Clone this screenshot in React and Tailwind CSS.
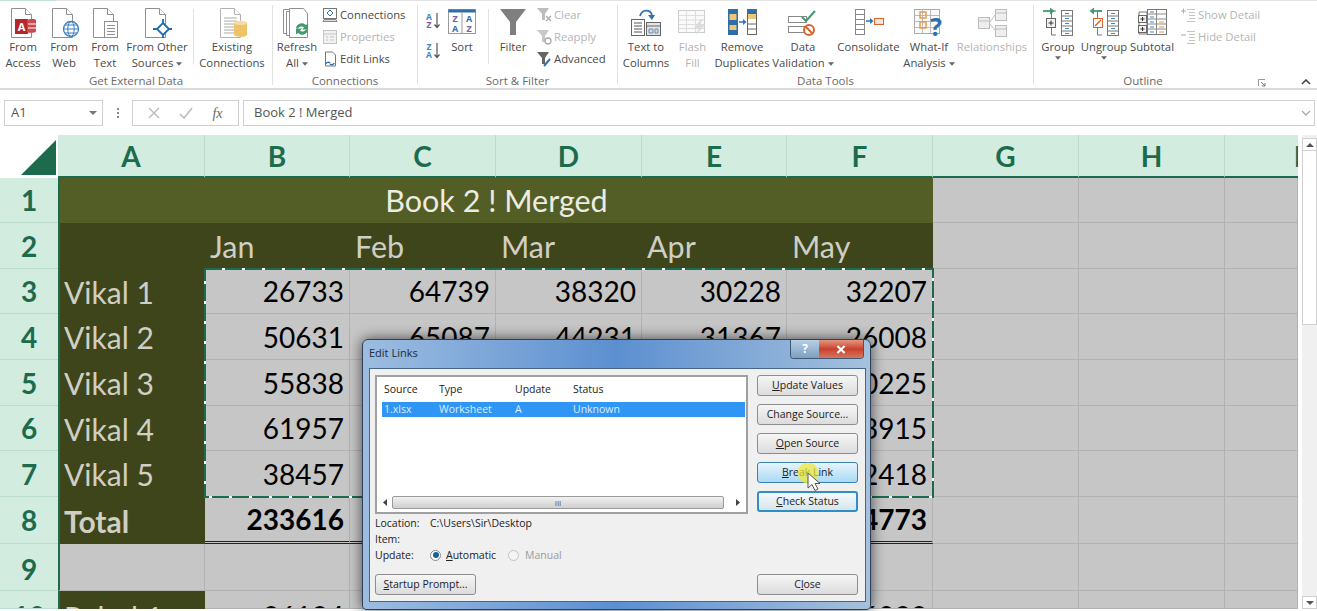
import React from "react";

const G = "#8f8f8f";

function Doc({ s = G }) {
    return (
        <>
            <path d="M4.5 1.500h14l6 6v23h-20z" fill="#fff" stroke={s} />
            <path d="M18.500 1.500v6h6" fill="#fff" stroke={s} />
        </>
    );
}

const Ico = ({ children, className = "w-[32px] h-[32px]", vb = "0 0 32 32" }) => (
    <svg viewBox={vb} className={className}>{children}</svg>
);

const FromAccess = () => (
    <Ico>
        <Doc />
        <rect x="8" y="12" width="13" height="15" fill="#b3272d" />
        <text x="14.500" y="24" fontSize="11" fontWeight="700" fill="#fff" textAnchor="middle" fontFamily="Open Sans">A</text>
        <path d="M20 13c2-1.500 9-1.500 9 0v11c0 2-7 2.500-9 1z" fill="#c9494c" />
        <path d="M21 17h8M21 21h8" stroke="#fff" />
    </Ico>
);
const FromWeb = () => (
    <Ico>
        <Doc />
        <circle cx="23" cy="22" r="7.500" fill="#fff" stroke="#3f7fc1" strokeWidth="1.300" />
        <ellipse cx="23" cy="22" rx="3.200" ry="7.500" fill="none" stroke="#3f7fc1" />
        <path d="M15.500 22h15M17 18h12M17 26h12" stroke="#3f7fc1" />
    </Ico>
);
const FromText = () => (
    <Ico>
        <Doc />
        <rect x="15.500" y="14.500" width="13" height="16" fill="#fff" stroke={G} />
        <path d="M18 18.500h8M18 21.500h8M18 24.500h8M18 27.500h8" stroke={G} />
    </Ico>
);
const FromOther = () => (
    <Ico>
        <Doc />
        <path d="M22 16l6 6-6 6-6-6z" fill="#fff" stroke="#1f6cb0" strokeWidth="1.800" />
        <path d="M22 12v5M22 27v4M12 22h5M27 22h4" stroke="#1f6cb0" strokeWidth="1.800" />
    </Ico>
);
const Existing = () => (
    <Ico>
        <Doc s="#b3b3b3" />
        <path d="M8 11h13M8 14h13M8 17h10M8 20h10M8 23h10M8 26h10" stroke="#aaa" />
        <path d="M18 16c2-2 12-2 13 0v12c-1 2.500-11 2.500-13 0z" fill="#eec36a" />
        <ellipse cx="24.500" cy="16" rx="6.500" ry="2" fill="#f6dca0" />
    </Ico>
);
const Refresh = () => (
    <Ico>
        <path d="M2.500 2.500h13v24h-13z" fill="#fff" stroke={G} />
        <path d="M5.500 4.500h13v24h-13z" fill="#fff" stroke={G} />
        <path d="M8.500 1.500h14l4 5v24h-18z" fill="#fff" stroke={G} />
        <path d="M15 21a6 6 0 0 1 10-3l2-1.500v6h-6l2-2a4 4 0 0 0-6 1z" fill="#3f9b6e" />
        <path d="M27 23a6 6 0 0 1-10 3l-2 1.500v-6h6l-2 2a4 4 0 0 0 6-1z" fill="#3f9b6e" />
    </Ico>
);
const Small = ({ children }) => <svg viewBox="0 0 16 16" className="w-[16px] h-[16px] shrink-0">{children}</svg>;
const ConnIco = () => (
    <Small>
        <rect x="1.500" y="1.500" width="13" height="10" fill="#fff" stroke="#777" />
        <path d="M8 3l3 3-3 3-3-3z" fill="#fff" stroke="#2d72b8" />
        <path d="M2 12.500l-1 2h14l-1-2z" fill="#ddd" stroke="#888" />
    </Small>
);
const PropIco = () => (
    <Small>
        <rect x="1.500" y="1.500" width="13" height="13" fill="#f2f2f2" stroke="#c4c4c4" />
        <path d="M2 5h12M4 8h2M8 8h4M4 11h2M8 11h4" stroke="#c4c4c4" />
    </Small>
);
const LinksIco = () => (
    <Small>
        <path d="M3.500 1h7l3 3v11h-10z" fill="#fff" stroke="#777" />
        <path d="M4 13c0-2 3-2 4-1M12 12c0 2-3 2-4 1" fill="none" stroke="#2d72b8" strokeWidth="1.500" />
    </Small>
);
const SortSmall = ({ up }) => (
    <svg viewBox="0 0 16 18" className="w-[16px] h-[18px]">
        <text x="4" y="8" fontSize="8.500" fontWeight="700" fill="#3f86c8" textAnchor="middle" fontFamily="Open Sans">{up ? "A" : "Z"}</text>
        <text x="4" y="16" fontSize="8.500" fontWeight="700" fill={up ? "#7d5aa6" : "#3f86c8"} textAnchor="middle" fontFamily="Open Sans">{up ? "Z" : "A"}</text>
        <path d="M12 1v14M9.500 12.500l2.500 3 2.500-3" fill="none" stroke="#555" strokeWidth="1.200" />
    </svg>
);
const SortBig = () => (
    <svg viewBox="0 0 28 25" className="w-[28px] h-[25px]">
        <rect x=".5" y=".5" width="27" height="24" fill="#fff" stroke="#999" />
        <rect x=".5" y=".5" width="27" height="3" fill="#2f6fa8" />
        <path d="M14 3v21" stroke="#999" />
        <text x="7" y="13" fontSize="9" fontWeight="700" fill="#7d5aa6" textAnchor="middle" fontFamily="Open Sans">Z</text>
        <text x="7" y="23" fontSize="9" fontWeight="700" fill="#2f6fa8" textAnchor="middle" fontFamily="Open Sans">A</text>
        <text x="21" y="13" fontSize="9" fontWeight="700" fill="#2f6fa8" textAnchor="middle" fontFamily="Open Sans">A</text>
        <text x="21" y="23" fontSize="9" fontWeight="700" fill="#7d5aa6" textAnchor="middle" fontFamily="Open Sans">Z</text>
    </svg>
);
const Funnel = () => (
    <svg viewBox="0 0 28 28" className="w-[28px] h-[28px]">
        <path d="M1 1h26l-10 13v13h-6V14z" fill="#7f7f7f" />
    </svg>
);
const SmallFunnel = ({ c, children }) => (
    <Small>
        <path d="M1 1h12l-4 6v6H6V7z" fill={c} />
        {children}
    </Small>
);
const TextCols = () => (
    <Ico>
        <rect x="1.500" y="12.500" width="13" height="16" fill="#fff" stroke="#666" />
        <path d="M4 16h8M4 19h8M4 22h8M4 25h8" stroke="#555" />
        <rect x="16.500" y="15.500" width="14" height="13" fill="#e4e4e4" stroke="#666" />
        <path d="M16.500 19h14" stroke="#666" />
        <path d="M19 22h4v4h-4zM25 22h3v4h-3z" fill="#cfdbe8" stroke="#6b8fb3" />
        <path d="M10 9c2-7 10-7 12-1" fill="none" stroke="#2d72b8" strokeWidth="1.800" />
        <path d="M18 8h7l-3 5z" fill="#2d72b8" />
    </Ico>
);
const Flash = () => (
    <Ico>
        <rect x="1.500" y="3.500" width="26" height="22" fill="#fafafa" stroke="#ccc" />
        <path d="M1.500 8.500h26M1.500 13h26M1.500 17.500h26M1.500 21.500h26M9.500 3.500v22M18.500 3.500v22" stroke="#ddd" />
        <path d="M24 12l-7 9h5l-3 7 9-10h-5l3-6z" fill="#ddd" />
    </Ico>
);
const Remove = () => (
    <Ico>
        <rect x="2" y="2" width="10" height="26" fill="#2f6fa8" />
        <rect x="3.500" y="7" width="7" height="6" fill="#f0c674" />
        <rect x="3.500" y="18" width="7" height="5" fill="#f0c674" />
        <rect x="21.500" y="2.500" width="9" height="25" fill="#fff" stroke="#666" />
        <rect x="22" y="3" width="8" height="4" fill="#2f6fa8" />
        <rect x="22" y="7" width="8" height="5" fill="#f0c674" />
        <path d="M22 17h8M22 22h8" stroke="#666" />
        <path d="M13 15h5" stroke="#2d72b8" strokeWidth="1.500" />
        <path d="M17 12l3.500 3-3.500 3z" fill="#2d72b8" />
    </Ico>
);
const Validation = () => (
    <Ico>
        <rect x="1.500" y="9.500" width="18" height="6" fill="#fff" stroke="#888" />
        <rect x="1.500" y="19.500" width="18" height="6" fill="#fff" stroke="#888" />
        <path d="M15 10l4 4 9-10" fill="none" stroke="#3f9b6e" strokeWidth="2" />
        <circle cx="22" cy="23" r="5" fill="#fff" stroke="#d9642f" strokeWidth="2" />
        <path d="M18.500 19.500l7 7" stroke="#d9642f" strokeWidth="2" />
    </Ico>
);
const Consolidate = () => (
    <Ico>
        <rect x="2.500" y="2.500" width="9" height="25" fill="#fff" stroke="#888" />
        <path d="M3 7.500h8M3 12.500h8M3 17.500h8M3 22.500h8" stroke="#888" />
        <path d="M13 14h5" stroke="#2d72b8" strokeWidth="1.500" />
        <path d="M17 11l3.500 3-3.500 3z" fill="#2d72b8" />
        <rect x="21.500" y="11.500" width="9" height="6" fill="#fbe3d6" stroke="#d9642f" />
    </Ico>
);
const WhatIf = () => (
    <Ico>
        <rect x="1.500" y="2.500" width="25" height="24" fill="#fafafa" stroke="#aaa" />
        <path d="M1.500 8.500h25M1.500 14.500h25M1.500 20.500h25M9.500 2.500v24M17.500 2.500v24" stroke="#bbb" />
        <rect x="7" y="5" width="6" height="6" fill="none" stroke="#e3964a" strokeWidth="1.400" />
        <rect x="7" y="15" width="6" height="6" fill="none" stroke="#e3964a" strokeWidth="1.400" />
        <text x="23" y="29" fontSize="25" fontWeight="700" fill="#2f6fa8" textAnchor="middle" fontFamily="Open Sans">?</text>
    </Ico>
);
const Relations = () => (
    <Ico>
        <g fill="#eee" stroke="#bdbdbd">
            <rect x="2.500" y="10.500" width="11" height="11" />
            <rect x="19.500" y="2.500" width="11" height="11" />
            <rect x="19.500" y="18.500" width="11" height="11" />
        </g>
        <path d="M2.500 14h11M19.500 6h11M19.500 22h11M14 15l5-7M14 17l5 6" stroke="#bdbdbd" fill="none" />
    </Ico>
);
const OutlineBox = ({ plus, red }) => (
    <>
        <path d="M14 4H9.500v24H14" fill="none" stroke="#777" />
        <rect x="19.500" y="3.500" width="11" height="25" fill="#fff" stroke="#777" />
        <path d="M20 9h10M20 14h10M20 19h10M20 24h10" stroke="#777" />
        <path d="M23 6.500h4M23 11.500h4M23 16.500h4M23 21.500h4M23 26.500h4" stroke="#3f86c8" />
        <rect x={red ? "5.500" : "4.500"} y="11.500" width="9" height="9" fill={red ? "#fff" : "#f2f2f2"} stroke={red ? "#d9642f" : "#666"} />
        {plus ? <path d="M6.500 16h5M9 13.500v5" stroke="#333" /> : <path d="M7 19l6-6" stroke="#d9642f" strokeWidth="1.500" />}
    </>
);
const GroupIco = () => (
    <Ico>
        <OutlineBox plus />
        <path d="M1 4h10" stroke="#3f9b6e" strokeWidth="1.800" />
        <path d="M8 .5l4.500 3.500L8 7.500z" fill="#3f9b6e" />
    </Ico>
);
const UngroupIco = () => (
    <Ico>
        <OutlineBox red />
        <path d="M4 4h10" stroke="#3f9b6e" strokeWidth="1.800" />
        <path d="M6 .5L1.500 4 6 7.500z" fill="#3f9b6e" />
    </Ico>
);
const Subtotal = () => (
    <Ico>
        <rect x="11.500" y="2.500" width="19" height="25" fill="#fff" stroke="#777" />
        <path d="M12 7h18M12 12h18M12 17h18M12 22h18M20.500 3v24" stroke="#888" />
        <path d="M14 5h4M14 10h4M14 15h4M14 20h4M14 25h4" stroke="#3f86c8" />
        <path d="M23 15h5M23 20h5M23 25h5" stroke="#e3964a" />
        <path d="M3 5h8v22H3z" fill="none" stroke="#777" />
        <rect x="2.500" y="8.500" width="8" height="7" fill="#f2f2f2" stroke="#666" />
        <rect x="2.500" y="18.500" width="8" height="7" fill="#f2f2f2" stroke="#666" />
        <path d="M4.500 12h4M6.500 10v4M4.500 22h4M6.500 20v4" stroke="#333" />
    </Ico>
);
const Detail = ({ plus }) => (
    <Small>
        {plus ? <path d="M1 4h5M3.500 1.500v5" stroke="#aaa" /> : <path d="M1 6h5" stroke="#aaa" />}
        <path d="M7 2.500h8M9 5.500h6M9 8.500h6M9 11.500h6M7 14.500h8" stroke="#c4c4c4" />
    </Small>
);

const Caret = () => (
    <svg viewBox="0 0 7 4" className="inline-block w-[6px] h-[4px] ml-[3px] align-middle"><path d="M0 0h7L3.500 4z" fill="#666" /></svg>
);

function Big({ w, icon, lines, off, caret }) {
    return (
        <div className={`${w} shrink-0 flex flex-col items-center text-center leading-[16px] whitespace-nowrap ${off ? "text-[#b4b4b4]" : "text-[#4a4a4a]"}`}>
            <div className="flex items-center justify-center h-[33px] mt-[5px]">{icon}</div>
            {lines.map((l, i) => (
                <div key={i} className="h-[16px]">
                    {l}
                    {caret && i === lines.length - 1 ? <Caret /> : null}
                </div>
            ))}
        </div>
    );
}

const SmallBtn = ({ icon, label, off }) => (
    <div className={`flex items-center gap-[2px] h-[22px] whitespace-nowrap ${off ? "text-[#b4b4b4]" : "text-[#4a4a4a]"}`}>
        {icon}
        <span>{label}</span>
    </div>
);

const Group = ({ w, label, children, launcher, labelClass = "" }) => (
    <div className={`${w} shrink-0 relative flex flex-col h-[87px]`}>
        <div className="flex h-[74px]">{children}</div>
        <div className={`text-center text-[11.5px] leading-[14px] text-[#6a6a6a] ${labelClass}`}>{label}</div>
        {launcher}
    </div>
);

const Sep = () => <div className="w-px h-[80px] mt-[4px] bg-[#e2e2e2] shrink-0" />;

function Ribbon() {
    return (
        <div className="h-[90px] border-b-2 border-[#dcdcdc] font-['Open_Sans',sans-serif] text-[11.3px] bg-white">
            <div className="h-px flex bg-[#e4e4e4]"><div className="w-[56px] bg-[#bfe3d0]" /></div>
            <div className="flex">
                <Group w="w-[272px]" label="Get External Data">
                    <div className="flex pl-[2px]">
                        <Big w="w-[42px]" icon={<FromAccess />} lines={["From", "Access"]} />
                        <Big w="w-[40px]" icon={<FromWeb />} lines={["From", "Web"]} />
                        <Big w="w-[42px]" icon={<FromText />} lines={["From", "Text"]} />
                        <Big w="w-[62px]" icon={<FromOther />} lines={["From Other", "Sources"]} caret />
                        <div className="w-[5px]" />
                        <div className="w-px h-[55px] mt-[8px] bg-[#e2e2e2]" />
                        <div className="w-[2px]" />
                        <Big w="w-[72px]" icon={<Existing />} lines={["Existing", "Connections"]} />
                    </div>
                </Group>
                <Sep />
                <Group w="w-[144px]" label="Connections">
                    <div className="flex pl-[3px]">
                        <Big w="w-[42px]" icon={<Refresh />} lines={["Refresh", "All"]} caret />
                        <div className="flex flex-col pl-[4px] pt-[3px]">
                            <SmallBtn icon={<ConnIco />} label="Connections" />
                            <SmallBtn icon={<PropIco />} label="Properties" off />
                            <SmallBtn icon={<LinksIco />} label="Edit Links" />
                        </div>
                    </div>
                </Group>
                <Sep />
                <Group w="w-[199px]" label="Sort & Filter">
                    <div className="flex pl-[6px]">
                        <div className="w-[18px] flex flex-col items-center gap-[12px] pt-[11px]">
                            <SortSmall up />
                            <SortSmall />
                        </div>
                        <div className="w-[40px] flex flex-col items-center text-[#4a4a4a] pt-[8px]">
                            <SortBig />
                            <div className="mt-[5px] leading-[16px]">Sort</div>
                        </div>
                        <div className="w-[6px]" />
                        <div className="w-px h-[55px] mt-[8px] bg-[#e2e2e2]" />
                        <div className="w-[4px]" />
                        <div className="w-[40px] flex flex-col items-center text-[#4a4a4a] pt-[7px]">
                            <Funnel />
                            <div className="mt-[3px] leading-[16px]">Filter</div>
                        </div>
                        <div className="flex flex-col pl-[3px] pt-[3px]">
                            <SmallBtn
                                label="Clear"
                                off
                                icon={<SmallFunnel c="#bdbdbd"><path d="M10 9l5 5M15 9l-5 5" stroke="#aaa" strokeWidth="1.300" /></SmallFunnel>}
                            />
                            <SmallBtn
                                label="Reapply"
                                off
                                icon={<SmallFunnel c="#c8c8c8"><circle cx="12" cy="12" r="3" fill="none" stroke="#aaa" strokeWidth="1.300" /></SmallFunnel>}
                            />
                            <SmallBtn
                                label="Advanced"
                                icon={<SmallFunnel c="#666"><path d="M8 15l6-7" stroke="#2d72b8" strokeWidth="2" /></SmallFunnel>}
                            />
                        </div>
                    </div>
                </Group>
                <Sep />
                <Group w="w-[415px]" label="Data Tools">
                    <div className="flex">
                        <Big w="w-[56px]" icon={<TextCols />} lines={["Text to", "Columns"]} />
                        <Big w="w-[37px]" icon={<Flash />} lines={["Flash", "Fill"]} off />
                        <Big w="w-[62px]" icon={<Remove />} lines={["Remove", "Duplicates"]} />
                        <Big w="w-[60px]" icon={<Validation />} lines={["Data", "Validation"]} caret />
                        <Big w="w-[71px]" icon={<Consolidate />} lines={["Consolidate"]} />
                        <Big w="w-[50px]" icon={<WhatIf />} lines={["What-If", "Analysis"]} caret />
                        <Big w="w-[76px]" icon={<Relations />} lines={["Relationships"]} off />
                    </div>
                </Group>
                <Sep />
                <Group
                    w="w-[234px]"
                    label="Outline"
                    labelClass="pr-[16px]"
                    launcher={
                        <svg viewBox="0 0 8 8" className="absolute right-[2px] bottom-[1px] w-[8px] h-[8px]">
                            <path d="M.5 7V.5H7" fill="none" stroke="#999" />
                            <path d="M3 3l4 4M7 4v3H4" fill="none" stroke="#777" />
                        </svg>
                    }
                >
                    <div className="flex pl-[1px]">
                        <div>
                            <Big w="w-[46px]" icon={<GroupIco />} lines={["Group"]} />
                            <div className="flex justify-center -ml-[3px] mt-[1px]"><Caret /></div>
                        </div>
                        <div>
                            <Big w="w-[46px]" icon={<UngroupIco />} lines={["Ungroup"]} />
                            <div className="flex justify-center -ml-[3px] mt-[1px]"><Caret /></div>
                        </div>
                        <Big w="w-[50px]" icon={<Subtotal />} lines={["Subtotal"]} />
                        <div className="flex flex-col pl-[3px] pt-[3px]">
                            <SmallBtn icon={<Detail plus />} label="Show Detail" off />
                            <SmallBtn icon={<Detail />} label="Hide Detail" off />
                        </div>
                    </div>
                </Group>
                <div className="flex-1 flex justify-end items-end pr-[6px] pb-[3px]">
                    <svg viewBox="0 0 10 6" className="w-[10px] h-[6px]"><path d="M1 5l4-4 4 4" fill="none" stroke="#444" strokeWidth="1.600" /></svg>
                </div>
            </div>
        </div>
    );
}

function FormulaBar() {
    return (
        <div className="h-[45px] pt-[10px] pl-[4px] pr-[2px] bg-white font-['Open_Sans',sans-serif] text-[13px] text-[#555]">
            <div className="flex h-[26px]">
                <div className="w-[99px] border border-[#d0d0d0] flex items-center justify-between pl-[6px] pr-[5px]">
                    <span>A1</span>
                    <svg viewBox="0 0 8 4" className="w-[8px] h-[4px]"><path d="M0 0h8L4 4z" fill="#777" /></svg>
                </div>
                <div className="w-[29px] flex flex-col items-center justify-center gap-[2px]">
                    <div className="w-[2px] h-[2px] bg-[#888]" />
                    <div className="w-[2px] h-[2px] bg-[#888]" />
                    <div className="w-[2px] h-[2px] bg-[#888]" />
                </div>
                <div className="w-[107px] border border-[#d0d0d0] flex items-center justify-around px-[6px] text-[#bbb]">
                    <svg viewBox="0 0 12 12" className="w-[12px] h-[12px]"><path d="M1 1l10 10M11 1L1 11" stroke="#bbb" strokeWidth="1.400" /></svg>
                    <svg viewBox="0 0 14 12" className="w-[14px] h-[12px]"><path d="M1 7l4 4 8-10" fill="none" stroke="#bbb" strokeWidth="1.600" /></svg>
                    <span className="font-['Liberation_Serif',serif] italic text-[14px] text-[#666]">fx</span>
                </div>
                <div className="w-[4px]" />
                <div className="flex-1 border border-[#d0d0d0] flex items-center justify-between pl-[10px] pr-[3px]">
                    <span>Book 2 ! Merged</span>
                    <svg viewBox="0 0 10 6" className="w-[10px] h-[6px]"><path d="M1 1l4 4 4-4" fill="none" stroke="#aaa" strokeWidth="1.300" /></svg>
                </div>
            </div>
        </div>
    );
}

const columns = ["A", "B", "C", "D", "E", "F", "G", "H"];
const sheet = [
    { n: 3, label: "Vikal 1", vals: ["26733", "64739", "38320", "30228", "32207"] },
    { n: 4, label: "Vikal 2", vals: ["50631", "65087", "44231", "31367", "26008"] },
    { n: 5, label: "Vikal 3", vals: ["55838", "61440", "35122", "42018", "50225"] },
    { n: 6, label: "Vikal 4", vals: ["61957", "52190", "47310", "28664", "23915"] },
    { n: 7, label: "Vikal 5", vals: ["38457", "48116", "39025", "51233", "42418"] },
    { n: 8, label: "Total", vals: ["233616", "291572", "204008", "183510", "174773"], total: true },
];

const RowHead = ({ n, extra = "items-center" }) => (
    <div className={`bg-[#d2ece0] border-b border-[#bcdccb] flex justify-center font-bold text-[#1d6b4d] text-[28px] overflow-hidden ${extra}`}>{n}</div>
);
const ColHead = ({ c }) => (
    <div className="bg-[#d2ece0] border-r border-[#bcdccb] border-b-2 border-b-[#1d6b4d] flex items-center justify-center font-bold text-[#1d6b4d] text-[28px] overflow-hidden">{c}</div>
);
const Gray = ({ children, extra = "" }) => (
    <div className={`bg-[#c6c6c6] border-r border-b border-[#b2b2b2] flex items-center justify-end pr-[5px] text-black overflow-hidden ${extra}`}>{children}</div>
);
const Blank3 = () => (
    <>
        <Gray />
        <Gray />
        <Gray />
    </>
);

function Sheet() {
    return (
        <div className="flex h-[474px]">
            <div className="relative flex-1 grid grid-cols-[58px_147px_145px_146px_146px_145px_146px_146px_146px_73px_4px] grid-rows-[43px_45px_46px_45px_46px_46px_45px_46px_47px_47px_18px] font-['Lato',sans-serif] text-[28px] leading-none overflow-hidden">
                <div className="bg-white flex items-end justify-end pr-[2px] pb-[3px]">
                    <svg viewBox="0 0 36 36" className="w-[35px] h-[35px]"><path d="M36 0v36H0z" fill="#1d6b4d" /></svg>
                </div>
                {columns.map((c) => <ColHead key={c} c={c} />)}
                <div className="bg-[#d2ece0] border-b-2 border-b-[#1d6b4d] overflow-hidden flex items-center justify-end font-bold text-[#1d6b4d] text-[28px] whitespace-nowrap">
                    <span className="-mr-[4px]">I</span>
                </div>
                <div className="bg-white" />

                <RowHead n={1} />
                <div className="col-span-6 bg-[#525e26] border-l-2 border-[#1d6b4d] flex items-center justify-center text-[#ecece4] text-[30.5px]">Book 2 ! Merged</div>
                <Blank3 />
                <div className="bg-white" />

                <RowHead n={2} />
                <div className="bg-[#3f451b] border-l-2 border-[#1d6b4d]" />
                {["Jan", "Feb", "Mar", "Apr", "May"].map((m) => (
                    <div key={m} className="bg-[#3f451b] flex items-center pl-[5px] text-[#cfcfc4] text-[30.5px]">{m}</div>
                ))}
                <Blank3 />
                <div className="bg-white" />

                {sheet.map((row) => (
                    <React.Fragment key={row.n}>
                        <RowHead n={row.n} />
                        <div className={`bg-[#3f451b] border-l-2 border-[#1d6b4d] flex items-center pl-[4px] text-[#cfcfc4] text-[30px] ${row.total ? "font-bold" : ""}`}>{row.label}</div>
                        {row.vals.map((v, i) => (
                            <Gray key={i} extra={row.total ? "font-bold !border-b-[3px] !border-double !border-b-[#222]" : ""}>{v}</Gray>
                        ))}
                        <Blank3 />
                        <div className="bg-white" />
                    </React.Fragment>
                ))}

                <RowHead n={9} extra="items-center pt-[3px]" />
                <Gray extra="border-l-2 !border-l-[#1d6b4d]" />
                <Gray />
                <Gray />
                <Gray />
                <Gray />
                <Gray />
                <Blank3 />
                <div className="bg-white" />

                <RowHead n={10} extra="items-start pt-[11px]" />
                <div className="bg-[#3f451b] border-l-2 border-[#1d6b4d] pl-[4px] pt-[11px] text-[#cfcfc4] text-[30px]">Rahul 1</div>
                {["36134", "41273", "29518", "33062", "46023"].map((v) => (
                    <Gray key={v} extra="!items-start pt-[11px]">{v}</Gray>
                ))}
                <Blank3 />
                <div className="bg-white" />

                {/* marching ants around the copied range */}
                <svg className="absolute inset-0 w-full h-full col-start-3 col-end-8 row-start-4 row-end-9 overflow-visible pointer-events-none">
                    <rect width="100%" height="100%" fill="none" stroke="#fff" strokeWidth="2" />
                    <rect width="100%" height="100%" fill="none" stroke="#1d6b4d" strokeWidth="2" strokeDasharray="17 3" />
                </svg>
            </div>
            <Scroll />
        </div>
    );
}

function Scroll() {
    return (
        <div className="w-[15px] shrink-0 flex flex-col bg-[#f0f0f0] pt-[3px]">
            <div className="h-[13px] bg-white border border-[#d0d0d0] flex items-center justify-center">
                <svg viewBox="0 0 8 4" className="w-[8px] h-[4px]"><path d="M0 4h8L4 0z" fill="#555" /></svg>
            </div>
            <div className="h-[174px] bg-white border border-[#d0d0d0] border-t-0" />
            <div className="flex-1" />
            <div className="h-[13px] bg-white border border-[#d0d0d0] flex items-center justify-center">
                <svg viewBox="0 0 8 4" className="w-[8px] h-[4px]"><path d="M0 0h8L4 4z" fill="#555" /></svg>
            </div>
        </div>
    );
}

function DlgBtn({ children, hover, focus }) {
    let look = "border-[#8d8d8d] bg-gradient-to-b from-[#f6f6f6] to-[#dcdcdc]";
    if (hover) look = "border-[#3c7fb1] bg-gradient-to-b from-[#e6f5fd] to-[#a9d9f5]";
    if (focus) look = "border-[#2f8fc4] border-2 bg-gradient-to-b from-[#f4f8fa] to-[#d8e6ee]";
    return (
        <div className={`relative w-[101px] h-[21px] shrink-0 rounded-[3px] border ${look} flex items-center justify-center text-[10.5px] text-[#222]`}>
            {children}
        </div>
    );
}

function EditLinks() {
    return (
        <div className="absolute left-[362px] top-[339px] w-[509px] h-[271px] rounded-t-[6px] rounded-b-[4px] border border-[#2e3f58] bg-gradient-to-r from-[#9cbde0] via-[#5c8fd0] to-[#a5c1dc] shadow-[0_0_14px_rgba(0,0,0,0.65)] font-['Open_Sans',sans-serif] text-[10.5px] text-[#222] flex flex-col">
            <div className="h-[28px] shrink-0 relative flex items-start pl-[6px] pt-[5px] text-[11px] text-[#1e2a36]">
                <span>Edit Links</span>
                <div className="absolute right-[6px] top-0 flex h-[19px] rounded-b-[4px] overflow-hidden border border-t-0 border-[#3e5878]">
                    <div className="w-[28px] bg-gradient-to-b from-[#b8cfe4] to-[#7d9fc2] flex items-center justify-center text-[12px] font-bold text-white">?</div>
                    <div className="w-[44px] bg-gradient-to-b from-[#e4967f] via-[#c9402c] to-[#d8745f] flex items-center justify-center">
                        <svg viewBox="0 0 10 10" className="w-[10px] h-[9px]"><path d="M1 1l8 8M9 1L1 9" stroke="#fff" strokeWidth="2.400" /></svg>
                    </div>
                </div>
            </div>
            <div className="ml-[6px] mr-[4px] mb-[7px] flex-1 bg-[#f0f0f0] border border-[#45668c] pt-[6px] pl-[5px] pr-[7px] pb-[6px] flex flex-col justify-between">
                <div className="flex gap-[9px]">
                    <div className="w-[373px]">
                        <div className="h-[139px] border-2 border-[#a0a0a0] bg-white flex flex-col">
                            <div className="h-[25px] shrink-0 flex items-center pl-[7px]">
                                <div className="w-[55px]">Source</div>
                                <div className="w-[76px]">Type</div>
                                <div className="w-[58px]">Update</div>
                                <div>Status</div>
                            </div>
                            <div className="h-[15px] shrink-0 ml-[5px] mr-[1px] pl-[2px] bg-[#2f96f5] text-[#dbeeff] flex items-center">
                                <div className="w-[55px]">1.xlsx</div>
                                <div className="w-[76px]">Worksheet</div>
                                <div className="w-[58px]">A</div>
                                <div>Unknown</div>
                            </div>
                            <div className="flex-1" />
                            <div className="h-[17px] shrink-0 mb-[1px] flex items-center px-[6px] gap-[5px]">
                                <svg viewBox="0 0 4 7" className="w-[4px] h-[7px]"><path d="M4 0v7L0 3.500z" fill="#444" /></svg>
                                <div className="flex-1 h-[13px] mr-[7px] rounded-[2px] border border-[#9a9a9a] bg-gradient-to-b from-[#f2f2f2] to-[#cfcfcf] flex items-center justify-center text-[8px] leading-none text-[#555]">III</div>
                                <svg viewBox="0 0 4 7" className="w-[4px] h-[7px]"><path d="M0 0v7l4-3.500z" fill="#444" /></svg>
                            </div>
                        </div>
                        <div className="mt-[1px] leading-[16px]">
                            <div className="flex"><span className="w-[55px]">Location:</span><span>C:\Users\Sir\Desktop</span></div>
                            <div>Item:</div>
                            <div className="flex items-center">
                                <span className="w-[55px]">Update:</span>
                                <span className="w-[11px] h-[11px] rounded-full border border-[#888] bg-white flex items-center justify-center mr-[5px]">
                                    <span className="w-[6px] h-[6px] rounded-full bg-[#1b5f9e]" />
                                </span>
                                <span className="w-[62px]"><u>A</u>utomatic</span>
                                <span className="w-[11px] h-[11px] rounded-full border border-[#c4c4c4] bg-[#f4f4f4] mr-[6px]" />
                                <span className="text-[#9a9a9a]">Manual</span>
                            </div>
                        </div>
                    </div>
                    <div className="flex flex-col gap-[8px]">
                        <DlgBtn><span><u>U</u>pdate Values</span></DlgBtn>
                        <DlgBtn><span>Chan<u>g</u>e Source...</span></DlgBtn>
                        <DlgBtn><span><u>O</u>pen Source</span></DlgBtn>
                        <DlgBtn hover>
                            <span><u>B</u>reak Link</span>
                            <svg viewBox="0 0 24 32" className="absolute left-[39px] -top-[1px] w-[24px] h-[32px] overflow-visible">
                                <circle cx="11" cy="11" r="10.500" fill="#f3e82e" fillOpacity=".7" />
                                <path d="M11 11v15l4-3.500 3 6 3-1.500-3-5.500h5z" fill="#fff" stroke="#555" strokeWidth="1" />
                            </svg>
                        </DlgBtn>
                        <DlgBtn focus><span><u>C</u>heck Status</span></DlgBtn>
                    </div>
                </div>
                <div className="flex justify-between">
                    <DlgBtn><span><u>S</u>tartup Prompt...</span></DlgBtn>
                    <DlgBtn><span>C<u>l</u>ose</span></DlgBtn>
                </div>
            </div>
        </div>
    );
}

export default function App() {
    return (
        <div className="relative w-[1317px] h-[611px] overflow-hidden bg-white">
            <Ribbon />
            <FormulaBar />
            <Sheet />
            <EditLinks />
        </div>
    );
}
